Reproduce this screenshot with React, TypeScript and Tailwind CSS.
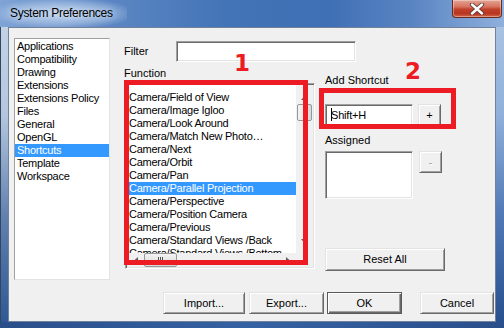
import React from "react";

const leftItems = [
  "Applications",
  "Compatibility",
  "Drawing",
  "Extensions",
  "Extensions Policy",
  "Files",
  "General",
  "OpenGL",
  "Shortcuts",
  "Template",
  "Workspace",
];

const funcItems = [
  "Camera/Field of View",
  "Camera/Image Igloo",
  "Camera/Look Around",
  "Camera/Match New Photo…",
  "Camera/Next",
  "Camera/Orbit",
  "Camera/Pan",
  "Camera/Parallel Projection",
  "Camera/Perspective",
  "Camera/Position Camera",
  "Camera/Previous",
  "Camera/Standard Views /Back",
  "Camera/Standard Views /Bottom",
];

const sunken =
  "bg-white border border-t-[#a0a0a0] border-l-[#a0a0a0] border-b-white border-r-white shadow-[inset_1px_1px_0_#696969,inset_-1px_-1px_0_#e3e3e3]";
const raised =
  "bg-[#f0f0f0] border border-t-[#e3e3e3] border-l-[#e3e3e3] border-b-[#696969] border-r-[#696969] shadow-[inset_1px_1px_0_#fff,inset_-1px_-1px_0_#a0a0a0] flex items-center justify-center";

function Btn({ label, w, def }: { label: string; w: string; def?: boolean }) {
  return (
    <div
      className={
        def
          ? `${w} h-[22px] bg-[#f0f0f0] border border-[#5a5a5a] shadow-[inset_1px_1px_0_#fff,inset_-1px_-1px_0_#696969,inset_-2px_-2px_0_#a0a0a0] flex items-center justify-center`
          : `${w} h-[22px] ${raised}`
      }
    >
      <span>{label}</span>
    </div>
  );
}

export default function App() {
  return (
    <div className="relative w-[504px] h-[328px] overflow-hidden flex flex-col [font-family:'Liberation_Sans',Arial,sans-serif] text-[11px] leading-[13px] text-black bg-[linear-gradient(180deg,#7ea3d6_0%,#a9c0de_25%,#6d90c4_60%,#2c5290_100%)]">
      {/* Title bar */}
      <div className="h-[27px] shrink-0 flex items-start justify-between bg-[linear-gradient(90deg,#7fa3d5_0%,#5b86c3_22%,#4374b7_45%,#3f6fb4_65%,#5a85c3_82%,#8fb0dc_100%)]">
        <div className="h-[27px] pl-[10px] pr-[14px] flex items-center bg-[radial-gradient(ellipse_at_center,rgba(220,232,248,0.8)_0%,rgba(200,218,242,0.4)_55%,rgba(255,255,255,0)_82%)]">
          <span className="text-[12px] tracking-[-0.3px] text-black [text-shadow:0_0_6px_#dfe9f7]">
            System Preferences
          </span>
        </div>
        <div className="mr-[2px] w-[50px] h-[18px] rounded-b-[4px] border border-t-0 border-[#6b2a1e] bg-[linear-gradient(180deg,#e4a595_0%,#d7725e_40%,#c0402a_55%,#b8361f_80%,#d5654a_100%)] shadow-[inset_0_0_0_1px_rgba(255,255,255,0.35)] flex items-center justify-center">
          <svg width="16" height="12" viewBox="0 0 16 12">
            <path d="M3 1.5 L13 10.5 M13 1.5 L3 10.5" stroke="#5b3a35" strokeWidth="4.2" strokeLinecap="round" />
            <path d="M3 1.5 L13 10.5 M13 1.5 L3 10.5" stroke="#ffffff" strokeWidth="2.4" strokeLinecap="round" />
          </svg>
        </div>
      </div>

      {/* Middle: frames + client */}
      <div className="flex flex-1 min-h-0">
        <div className="w-[8px] shrink-0 border-l border-l-[#33465f] bg-[linear-gradient(180deg,#c3d2e5_0%,#b4c6de_30%,#5f7fae_65%,#2f5894_100%)]" />
        <div className="w-[488px] shrink-0 border border-[#6f819b] bg-[#f0f0f0] flex flex-col">
          {/* Top area */}
          <div className="flex pl-[5px] pt-[10px]">
            {/* Left category list */}
            <div className="w-[96px] h-[242px] bg-white border border-t-[#a0a0a0] border-l-[#a0a0a0] border-b-[#e3e3e3] border-r-[#e3e3e3] flex flex-col pt-[1px]">
              {leftItems.map((it) => (
                <div
                  key={it}
                  className={`h-[13px] pl-[2px] tracking-[-0.25px] whitespace-nowrap ${
                    it === "Shortcuts" ? "bg-[#3399ff] text-white" : ""
                  }`}
                >
                  {it}
                </div>
              ))}
            </div>

            {/* Middle + right */}
            <div className="ml-[14px] flex flex-col">
              {/* Filter row */}
              <div className="mt-[3px] h-[21px] flex items-center">
                <div className="w-[52px]">Filter</div>
                <div className={`w-[180px] h-[21px] ${sunken}`} />
              </div>

              <div className="flex">
                {/* Function column */}
                <div className="w-[191px] flex flex-col">
                  <div className="mt-[5px] h-[13px]">Function</div>
                  <div className={`ml-[1px] mt-[3px] w-[190px] h-[186px] ${sunken} p-[1px] flex flex-col`}>
                    <div className="flex flex-1 min-h-0">
                      <div className="flex-1 min-w-0 overflow-hidden pt-[6px] pl-[1px]">
                        {funcItems.map((it) => (
                          <div
                            key={it}
                            className={`h-[13px] pl-[1px] tracking-[-0.25px] whitespace-nowrap ${
                              it === "Camera/Parallel Projection" ? "bg-[#3399ff] text-white" : ""
                            }`}
                          >
                            {it}
                          </div>
                        ))}
                      </div>
                      {/* vertical scrollbar */}
                      <div className="w-[17px] bg-[#f0f0f0] flex flex-col items-center">
                        <div className="h-[17px] flex items-end justify-center pb-[2px]">
                          <svg width="7" height="4" viewBox="0 0 7 4">
                            <path d="M0 4 L3.5 0 L7 4 Z" fill="#606060" />
                          </svg>
                        </div>
                        <div className="mt-[2px] w-[15px] h-[17px] rounded-[2px] border border-[#979797] bg-[linear-gradient(90deg,#f3f3f3,#d9d9d9)]" />
                        <div className="flex-1" />
                        <div className="h-[17px] flex items-start justify-center pt-[3px]">
                          <svg width="7" height="4" viewBox="0 0 7 4">
                            <path d="M0 0 L3.5 4 L7 0 Z" fill="#606060" />
                          </svg>
                        </div>
                      </div>
                    </div>
                    {/* horizontal scrollbar */}
                    <div className="h-[14px] flex bg-[#f0f0f0]">
                      <div className="flex-1 flex items-center">
                        <div className="w-[17px] flex justify-center">
                          <svg width="4" height="7" viewBox="0 0 4 7">
                            <path d="M4 0 L0 3.5 L4 7 Z" fill="#606060" />
                          </svg>
                        </div>
                        <div className="w-[33px] h-[14px] rounded-[2px] border border-[#979797] bg-[linear-gradient(180deg,#f3f3f3,#d9d9d9)] flex items-center justify-center gap-[1px]">
                          <div className="w-[1px] h-[6px] bg-[#555]" />
                          <div className="w-[1px] h-[6px] bg-[#555]" />
                          <div className="w-[1px] h-[6px] bg-[#555]" />
                        </div>
                        <div className="flex-1" />
                        <div className="w-[17px] flex justify-center">
                          <svg width="4" height="7" viewBox="0 0 4 7">
                            <path d="M0 0 L4 3.5 L0 7 Z" fill="#606060" />
                          </svg>
                        </div>
                      </div>
                      <div className="w-[17px] bg-[#f0f0f0]" />
                    </div>
                  </div>
                </div>

                {/* Right column */}
                <div className="ml-[10px] w-[120px] flex flex-col">
                  <div className="mt-[12px] h-[13px]">Add Shortcut</div>
                  <div className="mt-[17px] flex items-start">
                    <div className={`relative w-[88px] h-[22px] ${sunken} flex items-center pl-[5px]`}>
                      <span className="tracking-[-0.2px]">Shift+H</span>
                      <div className="absolute left-[5px] top-[3px] w-[1px] h-[13px] bg-black" />
                    </div>
                    <div className={`ml-[5px] w-[23px] h-[23px] ${raised}`}>+</div>
                  </div>
                  <div className="mt-[7px] h-[13px]">Assigned</div>
                  <div className="mt-[4px] flex items-start">
                    <div className={`w-[88px] h-[48px] ${sunken}`} />
                    <div className={`ml-[6px] w-[23px] h-[22px] ${raised} text-[#a0a0a0] [text-shadow:1px_1px_0_#fff]`}>-</div>
                  </div>
                  <div className={`mt-[49px] w-[120px] h-[23px] ${raised}`}>Reset All</div>
                </div>
              </div>
            </div>
          </div>

          {/* Bottom buttons */}
          <div className="mt-[12px] pr-[1px] flex justify-end">
            <Btn label="Import..." w="w-[82px]" />
            <div className="w-[4px]" />
            <Btn label="Export..." w="w-[75px]" />
            <div className="w-[3px]" />
            <Btn label="OK" w="w-[75px]" def />
            <div className="w-[18px]" />
            <Btn label="Cancel" w="w-[74px]" />
          </div>
        </div>
        <div className="w-[8px] shrink-0 bg-[linear-gradient(180deg,#a8c2e2_0%,#8fb0da_30%,#4f77b4_65%,#27508e_100%)]" />
      </div>
      <div className="h-[6px] shrink-0 bg-[linear-gradient(90deg,#2a4e8a,#3562a3_50%,#2a4e8a)]" />

      {/* Annotations */}
      <div className="absolute left-[124px] top-[80px] w-[184px] h-[185px] border-[5px] border-[#ed1c24]" />
      <div className="absolute left-[319px] top-[88px] w-[137px] h-[41px] border-[5px] border-[#ed1c24]" />
      <div className="absolute left-[234px] top-[49px] text-[23px] leading-[28px] font-bold text-[#ed1c24] [font-family:'DejaVu_Sans',sans-serif]">
        1
      </div>
      <div className="absolute left-[405px] top-[57px] text-[23px] leading-[28px] font-bold text-[#ed1c24] [font-family:'DejaVu_Sans',sans-serif]">
        2
      </div>
    </div>
  );
}
